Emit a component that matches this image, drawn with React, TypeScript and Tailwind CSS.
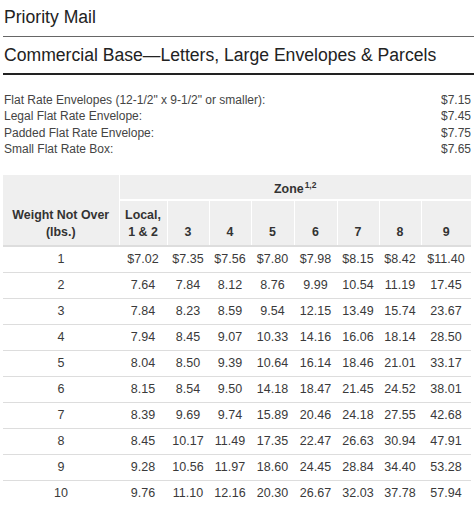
const rates = [
  ["1", "$7.02", "$7.35", "$7.56", "$7.80", "$7.98", "$8.15", "$8.42", "$11.40"],
  ["2", "7.64", "7.84", "8.12", "8.76", "9.99", "10.54", "11.19", "17.45"],
  ["3", "7.84", "8.23", "8.59", "9.54", "12.15", "13.49", "15.74", "23.67"],
  ["4", "7.94", "8.45", "9.07", "10.33", "14.16", "16.06", "18.14", "28.50"],
  ["5", "8.04", "8.50", "9.39", "10.64", "16.14", "18.46", "21.01", "33.17"],
  ["6", "8.15", "8.54", "9.50", "14.18", "18.47", "21.45", "24.52", "38.01"],
  ["7", "8.39", "9.69", "9.74", "15.89", "20.46", "24.18", "27.55", "42.68"],
  ["8", "8.45", "10.17", "11.49", "17.35", "22.47", "26.63", "30.94", "47.91"],
  ["9", "9.28", "10.56", "11.97", "18.60", "24.45", "28.84", "34.40", "53.28"],
  ["10", "9.76", "11.10", "12.16", "20.30", "26.67", "32.03", "37.78", "57.94"],
];

const flatRates = [
  ["Flat Rate Envelopes (12-1/2\" x 9-1/2\" or smaller):", "$7.15"],
  ["Legal Flat Rate Envelope:", "$7.45"],
  ["Padded Flat Rate Envelope:", "$7.75"],
  ["Small Flat Rate Box:", "$7.65"],
];

const zones = ["3", "4", "5", "6", "7", "8", "9"];

export default function App() {
  return (
    <div className="w-[474px] h-[506px] overflow-hidden bg-white font-['Liberation_Sans',Arial,sans-serif]">
      {/* Titles */}
      <div className="pl-[3px]">
        <h1 className="pt-[7px] pb-[9px] pl-[1px] text-[17.6px] leading-[20px] text-[#222] border-b border-[#666]">
          Priority Mail
        </h1>
        <h2 className="pt-[7.5px] pb-[8.5px] pl-[1px] text-[17.6px] leading-[20px] text-[#222] border-b-2 border-[#222]">
          Commercial Base—Letters, Large Envelopes &amp; Parcels
        </h2>
      </div>

      <div className="pl-[3px] pr-[3px]">
        {/* Flat rate list */}
        <div className="mt-[17px] pl-[1px] text-[12px] leading-[16.4px] text-[#444]">
          {flatRates.map(([label, price]) => (
            <div key={label} className="flex justify-between">
              <span>{label}</span>
              <span>{price}</span>
            </div>
          ))}
        </div>

        {/* Rate table */}
        <table className="mt-[17.6px] w-[468px] table-fixed border-collapse text-[#3a3a3a]">
          <colgroup>
            <col className="w-[116px]" />
            <col className="w-[48px]" />
            <col className="w-[42px]" />
            <col className="w-[42px]" />
            <col className="w-[43px]" />
            <col className="w-[43px]" />
            <col className="w-[42px]" />
            <col className="w-[42px]" />
            <col />
          </colgroup>
          <thead className="bg-[#efefef] text-[12.4px] font-bold leading-[17px] text-[#333]">
            <tr className="h-[25px]">
              <th
                rowSpan={2}
                className="align-bottom pb-[4px] border-r border-white border-b-2 border-b-[#ddd]"
              >
                Weight Not Over
                <br />
                (lbs.)
              </th>
              <th colSpan={8} className="align-middle pt-[4px] border-b-2 border-white">
                Zone<sup className="text-[8.5px] font-bold ml-[1px] -top-[5px]">1,2</sup>
              </th>
            </tr>
            <tr className="h-[46px] border-b-2 border-[#ddd]">
              <th className="align-bottom pb-[4px] border-r border-white">
                Local,
                <br />1 &amp; 2
              </th>
              {zones.map((z, i) => (
                <th
                  key={z}
                  className={`align-bottom pb-[4px] ${i < zones.length - 1 ? "border-r border-white" : ""}`}
                >
                  {z}
                </th>
              ))}
            </tr>
          </thead>
          <tbody className="text-[12.5px]">
            {rates.map((row) => (
              <tr key={row[0]} className="h-[26px] border-b border-[#ddd]">
                {row.map((cell, i) => (
                  <td key={i} className="text-center align-middle p-0">
                    {cell}
                  </td>
                ))}
              </tr>
            ))}
          </tbody>
        </table>
      </div>
    </div>
  );
}
